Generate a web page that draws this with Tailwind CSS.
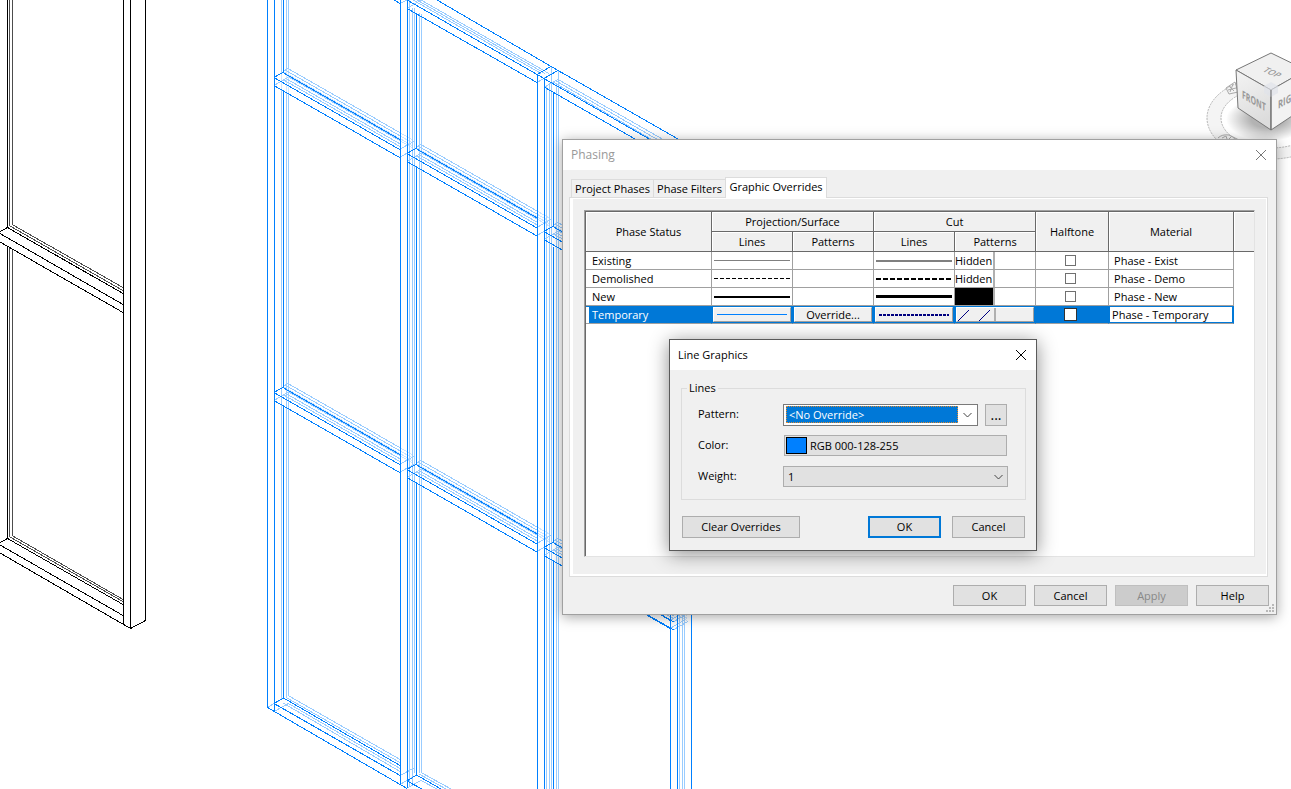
<!DOCTYPE html>
<html lang="en">
<head>
    <meta charset="UTF-8">
    <meta name="viewport" content="width=device-width, initial-scale=1.0">
    <title>Phasing</title>
    <script src="https://cdn.jsdelivr.net/npm/@tailwindcss/browser@4"></script>
</head>
<body class="relative h-screen overflow-hidden bg-white font-['Open_Sans','Noto_Sans',sans-serif] text-[11px] leading-4 text-black">

    <!-- 3D view: existing wall in black, temporary wall in blue -->
    <svg class="absolute inset-0 h-full w-full" fill="none" shape-rendering="crispEdges" aria-hidden="true">
        <g stroke="#4d4d4d">
            <path d="M9.500 0V225M12.500 0V225M9.500 248V537M12.500 249V536"/>
            <path d="M9 225.500L123 290.500M12 224.500L123 287.500M9 536.500L123 601.500M12 535.500L123 599.500"/>
        </g>
        <g stroke="#000">
            <path d="M7.500 0V227M7.500 247V538M123.500 0V624M130.500 0V628M145.500 0V621"/>
            <path d="M0 231.500L7.500 227.500L123 293.500M0 233.500L123 304.500M0 242L123 312.500"/>
            <path d="M0 542.500L7.500 538.500L123 604.500M0 545L123 615.500M0 553L130.500 628.500L145.500 620.500"/>
        </g>
        <g id="faint" stroke="#cce5ff"></g>
        <g id="light" stroke="#99ccff">
            <path d="M281.500 0V73M281.500 90V699M286.500 0V70M286.500 92V697M288.500 0V69M288.500 93V695"/>
            <path d="M409.500 0V786M412.500 8V784M414.500 8V773M419.500 13V773M421.500 14V772"/>
            <path d="M546.500 85V789M549.500 83V789M551.500 66V789M556.500 83V789M558.500 70V789"/>
            <path d="M679.500 612V789M682.500 612V789M684.500 612V789"/>
            <path d="M267 707.500L283 698.500M274 711.500L288.500 703.500L400 768.500M283 703L400 771.500M288 695.500L400 759.500M286 697.500L400 762.500M400 784.500L412 777.500M400 775.500L414 768"/>
            <path d="M407 788L421 780.500L437 789M421 772.500L451 789M419 774L446 789"/>
            <path d="M421 0L549 73.500M417 0L545 73.500M413 0L541 73.500M400 3.500L407 0M407 8.500L421 0M537 82.500L551 74"/>
            <path d="M544 87L558 79.500L664 140M556 81L660 141M553 82L656 142"/>
            <path d="M670 628.500L684 620.500M670 620.500L684 612.500"/>
        </g>
        <g id="dark" stroke="#0080ff">
            <path d="M267.500 0V708M274.500 0V711M283.500 0V72M283.500 91V387M283.500 406V698"/>
            <path d="M400.500 0V784M407.500 0V788M416.500 14V148M416.500 168V464M416.500 483V775"/>
            <path d="M537.500 74V789M544.500 78V789M553.500 92V226M553.500 247V542M553.500 560V789"/>
            <path d="M670.500 612V789M677.500 612V789M691.500 612V789"/>
            <path d="M274 703.500L283.500 698L400 765.500M274 703.500L400 775.500M267.500 707.500L407 788.500M407 781L416.500 775L441 789M407 781L422 789"/>
            <path d="M394 0L400 3.500M407 0L544 78.500L650 139.500M407 8.500L537 82.500M437 0L558 70.500L679 139.500M537 74.500L551 66.500M544 78.500L558 70.500M544 87L636 139.500"/>
            <path d="M645 614L670 628.500M660 614L670 620.500"/>
        </g>
    </svg>

    <!-- View cube -->
    <svg class="absolute top-10 right-0 h-[130px] w-[101px]" viewBox="1190 40 101 130" aria-hidden="true">
        <defs>
            <radialGradient id="cubeShadow"><stop offset="0.400" stop-color="#000" stop-opacity="0.300"/><stop offset="1" stop-color="#000" stop-opacity="0"/></radialGradient>
            <linearGradient id="frontFace" x1="0" y1="0" x2="0.300" y2="1"><stop offset="0" stop-color="#f4f4f4"/><stop offset="1" stop-color="#dcdcdc"/></linearGradient>
        </defs>
        <path fill="#f4f4f4" fill-rule="evenodd" stroke="#b4b4b4" stroke-dasharray="2 1" d="M1207 118a64 41 0 1 0 128 0a64 41 0 1 0 -128 0ZM1221 118a50 30 0 1 0 100 0a50 30 0 1 0 -100 0Z"/>
        <ellipse cx="1268" cy="119" rx="42" ry="22" fill="url(#cubeShadow)"/>
        <g fill="none" stroke="#a8a8a8">
            <path d="M1226 88L1235 82L1238 92L1229 94ZM1229 86L1234 91M1233 84L1230 92M1228 90L1236 88"/>
            <path d="M1218 138Q1222 134 1229 135L1239 140M1222 138L1226 136L1227 139M1229 139L1231 137"/>
        </g>
        <g stroke="#777" stroke-linejoin="round">
            <path fill="#f0f0f0" d="M1236 70L1271 53L1306 70L1271 90Z"/>
            <path fill="url(#frontFace)" d="M1236 70L1271 90V130L1238 108Z"/>
            <path fill="#f2f2f2" d="M1271 90L1306 70L1304 108L1271 130Z"/>
        </g>
        <path fill="#dfe3e9" d="M1264 86L1271 82L1278 86V93L1271 97L1264 93Z" opacity="0.700"/>
        <path stroke="#777" d="M1271 90V130"/>
        <g fill="#999" font-family="Open Sans" font-weight="700" font-size="11">
            <text transform="matrix(0.640 0.360 0 1 1242 98)">FRONT</text>
            <text transform="matrix(0.700 -0.400 0 1 1278 109)">RIGHT</text>
            <text transform="matrix(0.700 0.320 -0.700 0.500 1262 71)" font-weight="600">TOP</text>
        </g>
    </svg>

    <!-- Phasing dialog -->
    <section class="absolute top-[139px] left-[562px] flex h-[476px] w-[715px] flex-col border border-[#a0a0a0] bg-[#f0f0f0] shadow-[0_2px_12px_rgba(0,0,0,0.35)]" aria-label="Phasing">
        <header class="flex h-[30px] items-center justify-between bg-white px-2">
            <h1 class="text-xs text-[#999]">Phasing</h1>
            <button class="p-px" aria-label="Close">
                <svg class="block h-3 w-3" viewBox="0 0 12 12" stroke="#777"><path d="M1 1L11 11M11 1L1 11"/></svg>
            </button>
        </header>

        <nav class="relative z-10 flex items-end px-2 pt-[7px]">
            <button class="h-[18px] w-[82px] border-t border-l border-[#dcdcdc] whitespace-nowrap">Project Phases</button>
            <button class="h-[18px] w-[72px] border-t border-l border-[#dcdcdc] whitespace-nowrap">Phase Filters</button>
            <button class="-mb-px h-[21px] w-[102px] border border-b-0 border-[#dcdcdc] bg-white pb-[2px] whitespace-nowrap">Graphic Overrides</button>
        </nav>

        <div class="mr-2 ml-[6px] flex h-[380px] flex-col border border-[#dcdcdc] bg-white pt-px pr-px pb-[2px] pl-[3px]">
            <div class="flex-1 bg-[#f0f0f0] px-[11px] pt-[11px] pb-[17px]">
                <div class="h-full border border-t-[#a0a0a0] border-r-[#e3e3e3] border-b-[#e3e3e3] border-l-[#a0a0a0]">
                <div class="h-full border-t border-l border-[#696969] bg-white">
                    <table class="w-full table-fixed border-separate border-spacing-0">
                        <colgroup>
                            <col class="w-[126px]"><col class="w-[81px]"><col class="w-[81px]"><col class="w-[81px]"><col class="w-[81px]"><col class="w-[73px]"><col class="w-[125px]"><col>
                        </colgroup>
                        <thead class="bg-[#f0f0f0] [&_th]:border-r [&_th]:border-b [&_th]:border-[#696969] [&_th]:p-0 [&_th]:font-normal [&_th]:shadow-[inset_1px_1px_0_#fff]">
                            <tr class="h-5">
                                <th rowspan="2">Phase Status</th>
                                <th colspan="2">Projection/Surface</th>
                                <th colspan="2">Cut</th>
                                <th rowspan="2">Halftone</th>
                                <th rowspan="2">Material</th>
                                <th rowspan="2" class="border-r-0!" aria-label="Filler"></th>
                            </tr>
                            <tr class="h-5">
                                <th>Lines</th>
                                <th>Patterns</th>
                                <th>Lines</th>
                                <th>Patterns</th>
                            </tr>
                        </thead>
                        <tbody class="[&_td]:h-[18px] [&_td]:border-r [&_td]:border-b [&_td]:border-[#a0a0a0] [&_td]:p-0">
                            <tr>
                                <td><span class="block pl-[6px]">Existing</span></td>
                                <td><div class="mx-[2px] h-px bg-[#808080]"></div></td>
                                <td></td>
                                <td><div class="mx-[2px] h-[2px] bg-[#808080]"></div></td>
                                <td><div class="h-[17px] w-10 border-r-2 border-[#b0b0b0] leading-[18px]">Hidden</div></td>
                                <td><input type="checkbox" aria-label="Existing halftone" class="ml-[29px] block h-[11px] w-[11px] appearance-none border border-[#707070] bg-white"></td>
                                <td><span class="block pl-[5px]">Phase - Exist</span></td>
                            </tr>
                            <tr>
                                <td><span class="block pl-[6px]">Demolished</span></td>
                                <td><svg class="mx-[2px] block h-px w-[77px]" shape-rendering="crispEdges"><path stroke="#000" stroke-dasharray="4 2" d="M0 .5H77"/></svg></td>
                                <td></td>
                                <td><svg class="mx-[2px] block h-[2px] w-[77px]" shape-rendering="crispEdges"><path stroke="#000" stroke-width="2" stroke-dasharray="5 2" d="M0 1H77"/></svg></td>
                                <td><div class="h-[17px] w-10 border-r-2 border-[#b0b0b0] leading-[18px]">Hidden</div></td>
                                <td><input type="checkbox" aria-label="Demolished halftone" class="ml-[29px] block h-[11px] w-[11px] appearance-none border border-[#707070] bg-white"></td>
                                <td><span class="block pl-[5px]">Phase - Demo</span></td>
                            </tr>
                            <tr>
                                <td><span class="block pl-[6px]">New</span></td>
                                <td><div class="mx-[2px] h-[2px] bg-black"></div></td>
                                <td></td>
                                <td><div class="mx-[2px] h-[3px] bg-black"></div></td>
                                <td><div class="h-[17px] w-10 border-r-2 border-[#b0b0b0] bg-black"></div></td>
                                <td><input type="checkbox" aria-label="New halftone" class="ml-[29px] block h-[11px] w-[11px] appearance-none border border-[#707070] bg-white"></td>
                                <td><span class="block pl-[5px]">Phase - New</span></td>
                            </tr>
                            <tr class="bg-[#0078d7] [&>td]:border-r-[#0078d7]!">
                                <td><span class="block border-l-[3px] border-white pl-[3px] text-white">Temporary</span></td>
                                <td><button class="mx-px flex h-[15px] w-[78px] items-center border border-t-white border-r-[#a0a0a0] border-b-[#a0a0a0] border-l-white bg-[#f0f0f0] px-[3px]" aria-label="Projection lines"><span class="h-px w-full bg-[#0080ff]"></span></button></td>
                                <td><button class="mx-px block h-[15px] w-[78px] border border-t-white border-r-[#a0a0a0] border-b-[#a0a0a0] border-l-white bg-[#f0f0f0] leading-3">Override...</button></td>
                                <td><button class="mx-px flex h-[15px] w-[78px] items-center border border-t-white border-r-[#a0a0a0] border-b-[#a0a0a0] border-l-white bg-[#f0f0f0] px-[3px]" aria-label="Cut lines"><svg class="block h-[2px] w-full" shape-rendering="crispEdges"><path stroke="#000080" stroke-width="2" stroke-dasharray="3 1" d="M0 1H72"/></svg></button></td>
                                <td><button class="mx-px flex h-[15px] w-[78px] border border-t-white border-r-[#a0a0a0] border-b-[#a0a0a0] border-l-white bg-[#f0f0f0]" aria-label="Cut patterns"><svg class="block h-[13px] w-[39px] border-r-2 border-[#b0b0b0]" stroke="#000080"><path d="M1 13L12 2M22 13L33 2"/></svg></button></td>
                                <td><input type="checkbox" aria-label="Temporary halftone" class="ml-7 block h-[13px] w-[13px] appearance-none border border-[#333] bg-white"></td>
                                <td><input type="text" value="Phase - Temporary" aria-label="Temporary material" class="mx-px block h-[15px] w-[122px] bg-white pl-[2px] outline-none"></td>
                            </tr>
                        </tbody>
                    </table>
                </div>
                </div>
            </div>
        </div>

        <footer class="flex justify-end gap-2 px-[7px] pt-2">
            <button class="h-[21px] w-[73px] border border-[#adadad] bg-[#e1e1e1]">OK</button>
            <button class="h-[21px] w-[73px] border border-[#adadad] bg-[#e1e1e1]">Cancel</button>
            <button class="h-[21px] w-[73px] border border-[#bfbfbf] bg-[#ccc] text-[#888]" disabled>Apply</button>
            <button class="h-[21px] w-[73px] border border-[#adadad] bg-[#e1e1e1]">Help</button>
        </footer>
        <svg class="absolute right-[2px] bottom-[2px] h-2 w-2" fill="#b8b8b8" aria-hidden="true"><path d="M6 0h2v2h-2zM6 3h2v2h-2zM3 3h2v2h-2zM6 6h2v2h-2zM3 6h2v2h-2zM0 6h2v2h-2z"/></svg>
    </section>

    <!-- Line Graphics dialog -->
    <section class="absolute top-[339px] left-[669px] w-[368px] border border-[#5a5a5a] bg-[#f0f0f0] shadow-[0_3px_18px_rgba(0,0,0,0.45)]" aria-label="Line Graphics">
        <header class="flex h-[30px] items-center justify-between bg-white px-2">
            <h2>Line Graphics</h2>
            <button class="p-px" aria-label="Close">
                <svg class="block h-3 w-3" viewBox="0 0 12 12" stroke="#000"><path d="M1 1L11 11M11 1L1 11"/></svg>
            </button>
        </header>
        <form class="pt-[10px] pr-[10px] pb-3 pl-[11px]">
            <fieldset class="h-[120px] border border-[#dcdcdc] pl-4">
                <legend class="-ml-[11px] px-[2px]">Lines</legend>
                <div class="flex h-[31px] items-center pt-[6px]">
                    <label for="pattern" class="w-[85px] pb-px">Pattern:</label>
                    <div class="flex h-[22px] w-[195px] items-center justify-between border border-[#7a7a7a] bg-white px-[2px]">
                        <select id="pattern" class="h-[17px] w-[172px] appearance-none bg-[#0078d7] pl-[3px] text-white outline-1 -outline-offset-1 outline-[#e08a30] outline-dotted">
                            <option>&lt;No Override&gt;</option>
                        </select>
                        <svg class="mr-[3px] h-[6px] w-[9px]" fill="none" stroke="#444"><path d="M.5 1L4.500 5L8.500 1"/></svg>
                    </div>
                    <button type="button" class="ml-[7px] h-[22px] w-[22px] border border-[#adadad] bg-[#e1e1e1] text-sm leading-4">...</button>
                </div>
                <div class="flex h-[31px] items-center pt-[6px]">
                    <label for="color" class="w-[86px] pb-px">Color:</label>
                    <button id="color" type="button" class="flex h-[21px] w-[223px] items-center gap-[3px] border border-[#adadad] bg-[#e1e1e1] px-px">
                        <span class="h-[17px] w-[21px] border border-black bg-[#0080ff]"></span>RGB 000-128-255
                    </button>
                </div>
                <div class="flex h-[31px] items-center pt-[6px]">
                    <label for="weight" class="w-[85px] pb-px">Weight:</label>
                    <div class="flex h-[21px] w-[225px] items-center border border-[#adadad] bg-[#e1e1e1] pr-1">
                        <select id="weight" class="h-full flex-1 appearance-none pl-1 outline-none">
                            <option>1</option>
                        </select>
                        <svg class="h-[6px] w-[9px]" fill="none" stroke="#444"><path d="M.5 1L4.500 5L8.500 1"/></svg>
                    </div>
                </div>
            </fieldset>
            <div class="mt-4 flex justify-end gap-[11px] px-px">
                <button type="button" class="mr-auto h-[22px] w-[118px] border border-[#adadad] bg-[#e1e1e1]">Clear Overrides</button>
                <button type="button" class="h-[22px] w-[73px] border-2 border-[#0078d7] bg-[#e1e1e1]">OK</button>
                <button type="button" class="h-[22px] w-[73px] border border-[#adadad] bg-[#e1e1e1]">Cancel</button>
            </div>
        </form>
    </section>

    <script>
        // transoms: [left x, left y, length of the bay]
        const transoms = [
            [274, 77, 126], [407, 153, 130], [544, 231, 130],
            [274, 392, 126], [407, 469, 130], [544, 547, 130],
        ];
        const slope = 0.573;

        function addPath(group, d) {
            const path = document.createElementNS("http://www.w3.org/2000/svg", "path");
            path.setAttribute("d", d);
            document.getElementById(group).appendChild(path);
        }

        // line that starts dx, dy from the corner and stops at the next mullion
        function edge(x, y, len, dx, dy, over) {
            const end = len + over;
            return `M${x + dx} ${y + dy + 0.5}L${x + end} ${y + dy + 0.5 + (end - dx) * slope}`;
        }

        for (const [x, y, len] of transoms) {
            const right = x + len;
            const drop = len * slope;
            addPath("faint", edge(x, y, len, 14, -9, 13) + edge(x, y, len, 12, -7, 13) + edge(x, y, len, 9, -6, 13) + edge(x, y, len, 14, -1, 13));
            addPath("faint", `M${x + 7.5} ${y - 4}v18M${x + 12.5} ${y - 6}v22M${x + 14.5} ${y - 8}v24`);
            addPath("light", edge(x, y, len, 14, -9, 0) + edge(x, y, len, 12, -7, 0) + edge(x, y, len, 14, -1, 0) + edge(x, y, len, 12, 1, 0) + edge(x, y, len, 9, 2, 0));
            addPath("light", `M${x} ${y + 8.5}l14 -8M${right} ${y + drop + 8}l14 -8M${right} ${y + drop}l14 -8M${x + 9} ${y - 5}l5 -4`);
            addPath("dark", edge(x, y, len, 9, -5, 0) + edge(x, y, len, 0, 0, 0) + edge(x, y, len, 0, 8, 0) + `M${x} ${y + 0.5}l9.5 -5.5`);
        }
    </script>
</body>
</html>
